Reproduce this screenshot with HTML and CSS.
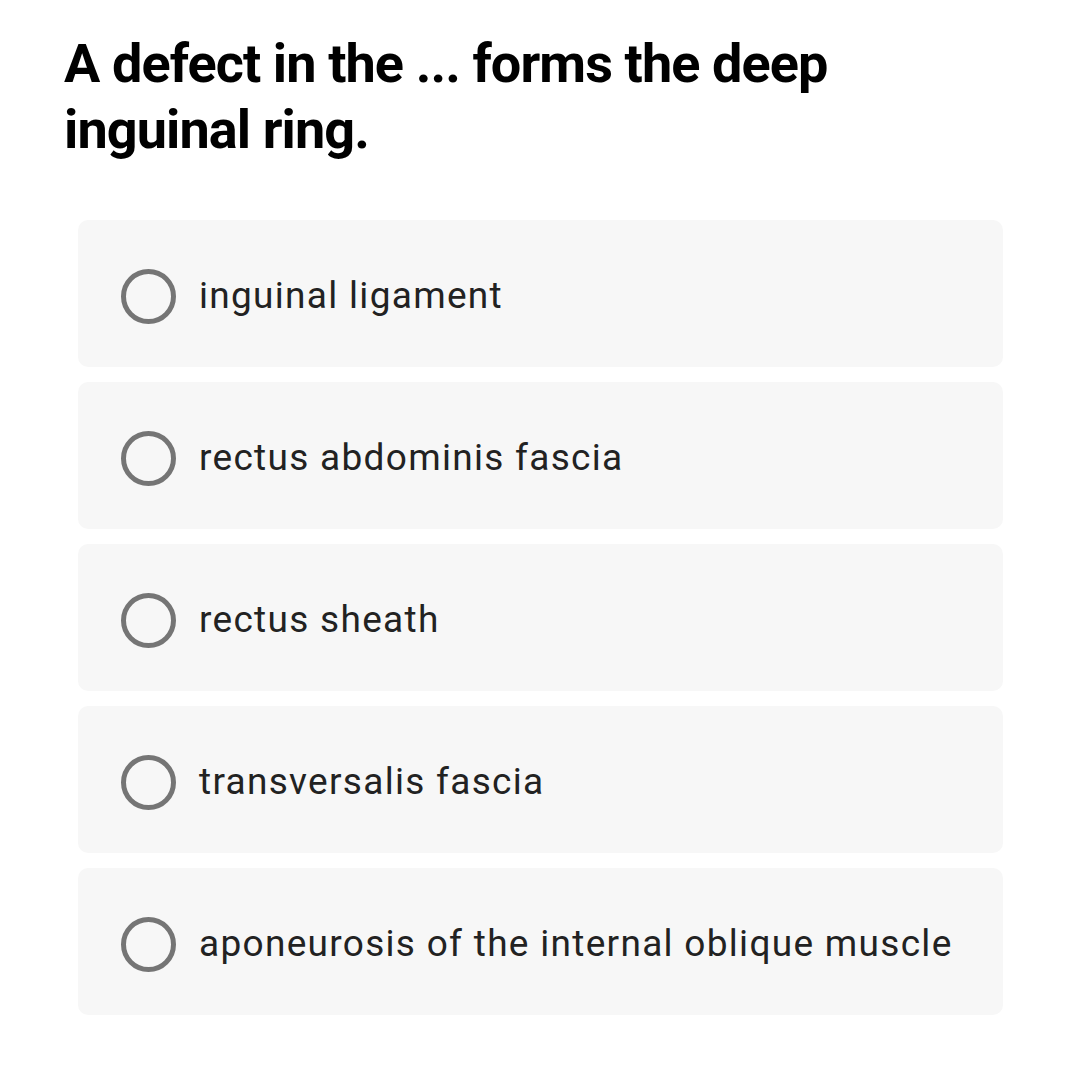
FILE: index.html
```html
<!DOCTYPE html>
<html>
<head>
<meta charset="utf-8">
<link rel="stylesheet" href="styles.css">
</head>
<body>
<div class="page">
  <h1 class="question">A defect in the ... forms the deep inguinal ring.</h1>
  <div class="options">
    <div class="option"><span class="radio"></span><span class="label">inguinal ligament</span></div>
    <div class="option"><span class="radio"></span><span class="label">rectus abdominis fascia</span></div>
    <div class="option"><span class="radio"></span><span class="label">rectus sheath</span></div>
    <div class="option"><span class="radio"></span><span class="label">transversalis fascia</span></div>
    <div class="option"><span class="radio"></span><span class="label">aponeurosis of the internal oblique muscle</span></div>
  </div>
</div>
</body>
</html>
```

FILE: styles.css
```css
html, body {
  margin: 0;
  padding: 0;
  background: #ffffff;
}
.page {
  padding: 31px 75px 0 64px;
  font-family: Roboto, "Liberation Sans", sans-serif;
}
.question {
  margin: 0;
  font-family: Roboto, "Liberation Sans", sans-serif;
  font-weight: 700;
  font-size: 54px;
  line-height: 66px;
  letter-spacing: -0.9px;
  color: #000;
  max-width: 800px;
}
.options {
  margin-top: 57px;
  margin-left: 14px;
  display: flex;
  flex-direction: column;
  gap: 15px;
}
.option {
  height: 147px;
  background: #f7f7f7;
  border-radius: 10px;
  display: flex;
  align-items: center;
  padding-left: 43px;
  box-sizing: border-box;
}
.radio {
  width: 55px;
  height: 55px;
  margin-top: 6px;
  border: 5px solid #757575;
  border-radius: 50%;
  box-sizing: border-box;
  flex: none;
}
.label {
  margin-left: 23px;
  font-size: 37px;
  color: #222;
  letter-spacing: 1.3px;
  position: relative;
  top: 2px;
}
```
